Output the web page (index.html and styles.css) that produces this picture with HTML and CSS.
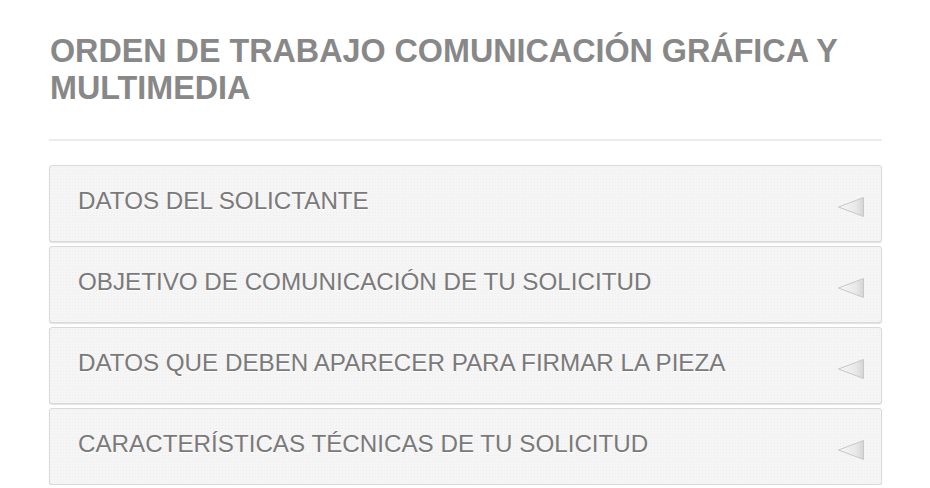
FILE: index.html
```html
<!DOCTYPE html>
<html lang="es">
<head>
<meta charset="utf-8">
<title>Orden de trabajo</title>
<link rel="stylesheet" href="styles.css">
</head>
<body>
<div class="page">
  <h1 class="title">ORDEN DE TRABAJO COMUNICACIÓN GRÁFICA Y MULTIMEDIA</h1>
  <hr class="rule">
  <div class="accordion">
    <div class="panel">
      <span class="label">DATOS DEL SOLICTANTE</span>
      <svg class="arrow" viewBox="0 0 28 22" width="28" height="22"><defs><linearGradient id="g1" x1="0" x2="1" y1="0" y2="0"><stop offset="0" stop-color="#f7f7f7"/><stop offset="0.7" stop-color="#e8e8e8"/><stop offset="1" stop-color="#d4d4d4"/></linearGradient></defs><polygon points="1.5,11 26.5,1.5 26.5,20.5" fill="url(#g1)" stroke="#c8c8c8" stroke-width="1"/></svg>
    </div>
    <div class="panel">
      <span class="label">OBJETIVO DE COMUNICACIÓN DE TU SOLICITUD</span>
      <svg class="arrow" viewBox="0 0 28 22" width="28" height="22"><polygon points="1.5,11 26.5,1.5 26.5,20.5" fill="url(#g1)" stroke="#c8c8c8" stroke-width="1"/></svg>
    </div>
    <div class="panel">
      <span class="label">DATOS QUE DEBEN APARECER PARA FIRMAR LA PIEZA</span>
      <svg class="arrow" viewBox="0 0 28 22" width="28" height="22"><polygon points="1.5,11 26.5,1.5 26.5,20.5" fill="url(#g1)" stroke="#c8c8c8" stroke-width="1"/></svg>
    </div>
    <div class="panel">
      <span class="label">CARACTERÍSTICAS TÉCNICAS DE TU SOLICITUD</span>
      <svg class="arrow" viewBox="0 0 28 22" width="28" height="22"><polygon points="1.5,11 26.5,1.5 26.5,20.5" fill="url(#g1)" stroke="#c8c8c8" stroke-width="1"/></svg>
    </div>
  </div>
</div>
</body>
</html>
```

FILE: styles.css
```css
html, body {
  margin: 0;
  padding: 0;
  background: #ffffff;
}

.page {
  width: 833px;
  margin-left: 49px;
  padding-top: 33px;
  font-family: "Liberation Sans", Arial, sans-serif;
}

.title {
  margin: 0 0 0 1px;
  font-size: 32.3px;
  line-height: 37px;
  font-weight: bold;
  color: #888888;
}

.rule {
  margin: 32px 0 24px 0;
  border: 0;
  height: 2px;
  background: #ececec;
}

.accordion {
  display: flex;
  flex-direction: column;
  gap: 4px;
}

.panel {
  box-sizing: border-box;
  height: 77px;
  display: flex;
  align-items: flex-start;
  justify-content: space-between;
  padding: 21px 16px 0 28px;
  border: 1px solid #d9d9d9;
  border-radius: 3px;
  background-color: #f5f5f5;
  background-image: radial-gradient(rgba(0,0,0,0.03) 0.6px, transparent 0.8px);
  background-size: 3px 3px;
  box-shadow: 0 1px 1px rgba(0,0,0,0.12);
}

.label {
  font-size: 24.2px;
  line-height: 27px;
  color: #7a7a7a;
  text-shadow: 0 1px 0 #ffffff;
}

.arrow {
  margin-top: 9px;
  flex: none;
}
```
